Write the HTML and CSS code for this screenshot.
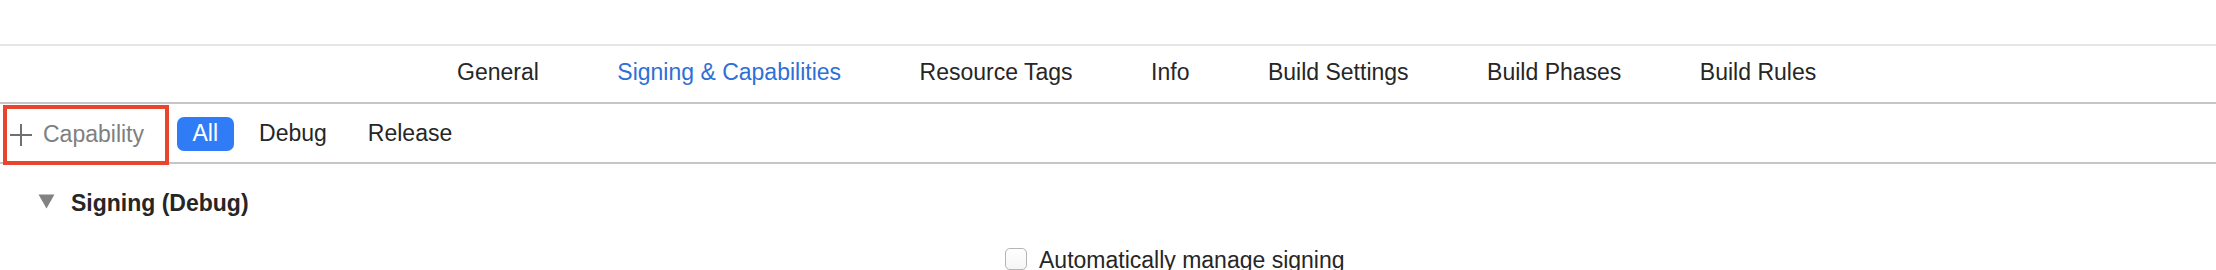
FILE: index.html
```html
<!DOCTYPE html>
<html lang="en">
<head>
<meta charset="utf-8">
<title>Signing &amp; Capabilities</title>
<link rel="stylesheet" href="styles.css">
</head>
<body>
<div class="top"></div>
<nav class="tabs">
  <span class="tab">General</span>
  <span class="tab active">Signing &amp; Capabilities</span>
  <span class="tab">Resource Tags</span>
  <span class="tab">Info</span>
  <span class="tab">Build Settings</span>
  <span class="tab">Build Phases</span>
  <span class="tab">Build Rules</span>
</nav>
<div class="filters">
  <div class="capability">
    <svg class="plus" width="22" height="22" viewBox="0 0 22 22" aria-hidden="true">
      <path d="M11 0V22M0 11H22" stroke="#707070" stroke-width="2" fill="none"/>
    </svg>
    <span>Capability</span>
  </div>
  <div class="segments">
    <span class="seg active">All</span>
    <span class="seg">Debug</span>
    <span class="seg">Release</span>
  </div>
  <div class="highlight"></div>
</div>
<section class="section">
  <div class="section-head">
    <svg class="disclosure" width="17" height="15" viewBox="0 0 17 15" aria-hidden="true">
      <path d="M0.5 0.5H16.5L8.5 14.5Z" fill="#828282"/>
    </svg>
    <span class="section-title">Signing (Debug)</span>
  </div>
  <div class="check-row">
    <span class="checkbox"></span>
    <span class="check-label">Automatically manage signing</span>
  </div>
</section>
</body>
</html>
```

FILE: styles.css
```css
html, body {
  margin: 0;
  padding: 0;
  background: #ffffff;
}

body {
  font-family: "Liberation Sans", Arial, Helvetica, sans-serif;
  font-size: 23px;
  color: #262626;
  overflow: hidden;
}

.top {
  height: 44px;
  border-bottom: 2px solid #e6e6e6;
}

.tabs {
  box-sizing: border-box;
  height: 58px;
  border-bottom: 2px solid #c6c6c6;
  display: flex;
  gap: 78.5px;
  padding-left: 457px;
  padding-top: 13px;
  line-height: 26px;
}

.tab {
  white-space: nowrap;
  color: #262626;
}

.tab.active {
  color: #2e6fd8;
}

.filters {
  position: relative;
  box-sizing: border-box;
  height: 60px;
  border-bottom: 2px solid #c6c6c6;
  display: flex;
  align-items: flex-start;
  padding-top: 13px;
  padding-left: 10px;
}

.capability {
  display: flex;
  align-items: center;
  gap: 11px;
  height: 34px;
  line-height: 32px;
  color: #808080;
  margin-right: 33px;
}

.plus {
  display: block;
  margin-top: 2px;
}

.segments {
  display: flex;
  gap: 10px;
}

.seg {
  height: 34px;
  line-height: 32px;
  padding: 0 15.5px;
  border-radius: 7px;
  color: #262626;
}

.seg.active {
  background: #2f7cf6;
  color: #ffffff;
}

.highlight {
  position: absolute;
  left: 3px;
  top: 1px;
  width: 166px;
  height: 60px;
  box-sizing: border-box;
  border: 4px solid #e8452c;
}

.section {
  padding-top: 26px;
}

.section-head {
  display: flex;
  align-items: flex-start;
  gap: 16px;
  padding-left: 38px;
  line-height: 26px;
}

.disclosure {
  display: block;
  margin-top: 4px;
}

.section-title {
  font-weight: bold;
  color: #262626;
}

.check-row {
  display: flex;
  align-items: flex-start;
  gap: 12px;
  padding-left: 1005px;
  margin-top: 31px;
  line-height: 26px;
}

.checkbox {
  box-sizing: border-box;
  width: 22px;
  height: 22px;
  margin-top: 1px;
  border: 1px solid #b4b4b4;
  border-radius: 5px;
  background: linear-gradient(#ffffff, #f5f5f5);
  box-shadow: 0 1px 0 rgba(0, 0, 0, 0.04);
}

.check-label {
  color: #262626;
}
```
